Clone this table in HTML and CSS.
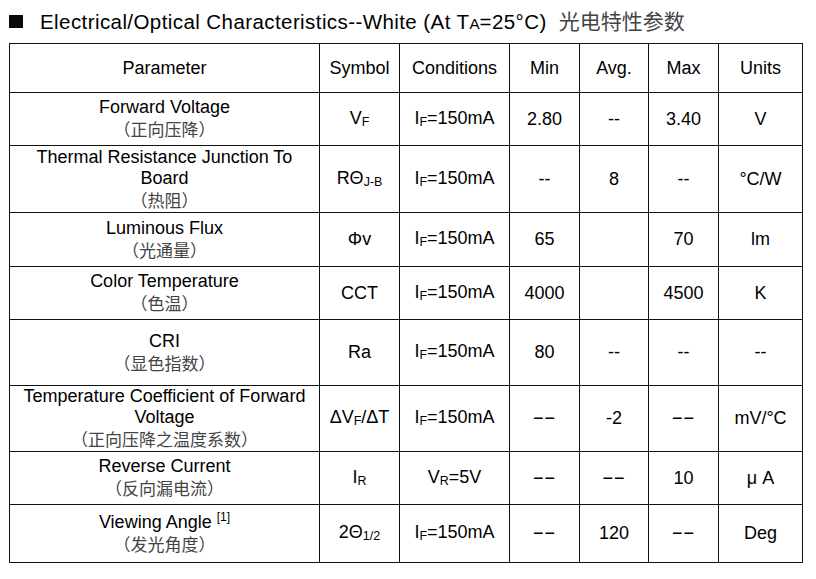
FILE: index.html
```html
<!DOCTYPE html>
<html lang="en">
<head>
<meta charset="utf-8">
<title>Electrical/Optical Characteristics</title>
<link rel="stylesheet" href="styles.css">
</head>
<body>
<h1 class="title">
  <span class="bullet"></span>
  <span class="title-en">Electrical/Optical Characteristics--White (At T<span class="small">A</span>=25°C)</span>
  <span class="title-cn">光电特性参数</span>
</h1>
<table class="spec">
  <colgroup>
    <col class="c-param"><col class="c-sym"><col class="c-cond"><col class="c-min"><col class="c-avg"><col class="c-max"><col class="c-unit">
  </colgroup>
  <thead>
    <tr class="h-49">
      <th>Parameter</th><th>Symbol</th><th>Conditions</th><th>Min</th><th>Avg.</th><th>Max</th><th>Units</th>
    </tr>
  </thead>
  <tbody>
    <tr class="h-53">
      <td class="param">Forward Voltage<br><span class="cn">（正向压降）</span></td>
      <td>V<span class="sub">F</span></td>
      <td>I<span class="sub">F</span>=150mA</td>
      <td>2.80</td><td>--</td><td>3.40</td><td>V</td>
    </tr>
    <tr class="h-67">
      <td class="param">Thermal Resistance Junction To<br>Board<br><span class="cn">（热阻）</span></td>
      <td>RΘ<span class="sub">J-B</span></td>
      <td>I<span class="sub">F</span>=150mA</td>
      <td>--</td><td>8</td><td>--</td><td>°C/W</td>
    </tr>
    <tr class="h-54">
      <td class="param">Luminous Flux<br><span class="cn">（光通量）</span></td>
      <td>Φv</td>
      <td>I<span class="sub">F</span>=150mA</td>
      <td>65</td><td></td><td>70</td><td>lm</td>
    </tr>
    <tr class="h-53">
      <td class="param">Color Temperature<br><span class="cn">（色温）</span></td>
      <td>CCT</td>
      <td>I<span class="sub">F</span>=150mA</td>
      <td>4000</td><td></td><td>4500</td><td>K</td>
    </tr>
    <tr class="h-66">
      <td class="param">CRI<br><span class="cn">（显色指数）</span></td>
      <td>Ra</td>
      <td>I<span class="sub">F</span>=150mA</td>
      <td>80</td><td>--</td><td>--</td><td>--</td>
    </tr>
    <tr class="h-66">
      <td class="param">Temperature Coefficient of Forward<br>Voltage<br><span class="cn">（正向压降之温度系数）</span></td>
      <td>ΔV<span class="sub">F</span>/ΔT</td>
      <td>I<span class="sub">F</span>=150mA</td>
      <td class="dash">−−</td><td>-2</td><td class="dash">−−</td><td>mV/°C</td>
    </tr>
    <tr class="h-53">
      <td class="param">Reverse Current<br><span class="cn">（反向漏电流）</span></td>
      <td>I<span class="sub">R</span></td>
      <td>V<span class="sub">R</span>=5V</td>
      <td class="dash">−−</td><td class="dash">−−</td><td>10</td><td>μ A</td>
    </tr>
    <tr class="h-58">
      <td class="param">Viewing Angle <span class="sup">[1]</span><br><span class="cn">（发光角度）</span></td>
      <td>2Θ<span class="sub">1/2</span></td>
      <td>I<span class="sub">F</span>=150mA</td>
      <td class="dash">−−</td><td>120</td><td class="dash">−−</td><td>Deg</td>
    </tr>
  </tbody>
</table>
</body>
</html>
```

FILE: styles.css
```css
html, body {
  margin: 0;
  padding: 0;
  background: #ffffff;
}

body {
  font-family: "Liberation Sans", Arial, sans-serif;
  color: #000;
}

.title {
  display: flex;
  align-items: baseline;
  margin: 0;
  padding: 8px 0 0 9px;
  height: 35px;
  box-sizing: border-box;
  font-weight: normal;
  font-size: 20.5px;
  line-height: 24px;
  letter-spacing: 0.42px;
  white-space: nowrap;
}

.bullet {
  display: inline-block;
  width: 14px;
  height: 13px;
  background: #0a0a0a;
  margin-right: 17px;
  align-self: center;
}

.title-en .small {
  font-size: 0.74em;
  letter-spacing: 0;
}

.title-cn {
  font-family: "Noto Sans CJK SC", sans-serif;
  font-size: 21px;
  color: #444;
  letter-spacing: 0;
  margin-left: 12px;
  font-weight: normal;
}

.spec {
  margin-left: 9px;
  margin-top: 8px;
  border-collapse: collapse;
  table-layout: fixed;
  width: 794px;
  font-size: 18px;
}

.c-param { width: 310px; }
.c-sym { width: 80px; }
.c-cond { width: 110px; }
.c-min { width: 70px; }
.c-avg { width: 69px; }
.c-max { width: 70px; }
.c-unit { width: 84px; }

.spec th,
.spec td {
  border: 1.3px solid #111;
  padding: 0;
  text-align: center;
  vertical-align: middle;
  font-weight: normal;
  line-height: 21px;
  white-space: nowrap;
}

.h-49 { height: 49px; }
.h-53 { height: 53px; }
.h-54 { height: 54px; }
.h-58 { height: 58px; }
.h-66 { height: 66px; }
.h-67 { height: 67px; }

.cn {
  font-family: "Noto Sans CJK SC", sans-serif;
  font-size: 17px;
  color: #444;
  font-weight: normal;
}

.sub {
  font-size: 12.5px;
  position: relative;
  top: 2px;
}

.sup {
  font-size: 12px;
  line-height: 0;
  position: relative;
  top: -7px;
}

.dash {
  letter-spacing: 1px;
}
```
